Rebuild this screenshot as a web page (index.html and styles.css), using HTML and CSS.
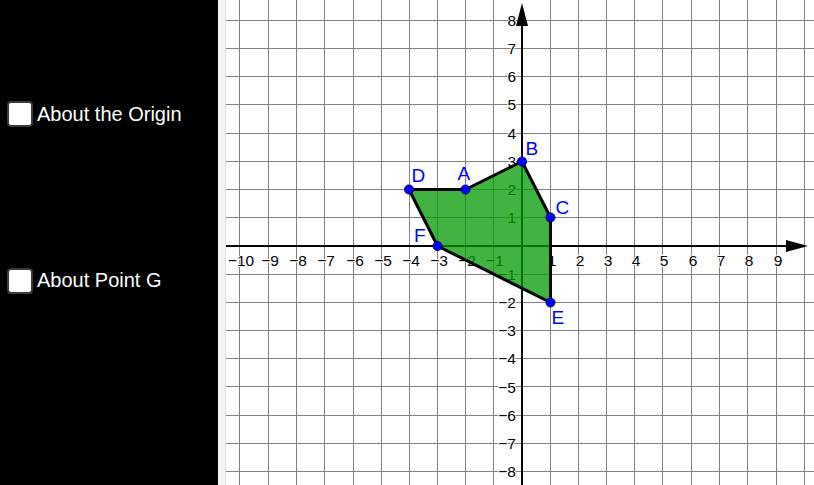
FILE: index.html
```html
<!DOCTYPE html>
<html>
<head>
<meta charset="utf-8">
<link rel="stylesheet" href="styles.css">
</head>
<body>
<div class="app">
  <div class="panel">
    <label class="check first"><span class="box"></span><span class="txt">About the Origin</span></label>
    <label class="check second"><span class="box"></span><span class="txt">About Point G</span></label>
  </div>
  <div class="graph">
    <svg class="plot" width="596" height="485" viewBox="218 0 596 485" xmlns="http://www.w3.org/2000/svg">
      <rect x="218" y="0" width="596" height="485" fill="#ffffff"/>
      <rect x="218" y="0" width="7" height="485" fill="#f4f4f4"/>
      <line x1="225.5" y1="0" x2="225.5" y2="485" stroke="#e2e2e2" stroke-width="1"/>
      <g class="grid" stroke="#808080" stroke-width="1">
        <line x1="239.5" y1="0" x2="239.5" y2="485"/>
        <line x1="268.5" y1="0" x2="268.5" y2="485"/>
        <line x1="296.5" y1="0" x2="296.5" y2="485"/>
        <line x1="324.5" y1="0" x2="324.5" y2="485"/>
        <line x1="353.5" y1="0" x2="353.5" y2="485"/>
        <line x1="381.5" y1="0" x2="381.5" y2="485"/>
        <line x1="409.5" y1="0" x2="409.5" y2="485"/>
        <line x1="437.5" y1="0" x2="437.5" y2="485"/>
        <line x1="465.5" y1="0" x2="465.5" y2="485"/>
        <line x1="493.5" y1="0" x2="493.5" y2="485"/>
        <line x1="550.5" y1="0" x2="550.5" y2="485"/>
        <line x1="578.5" y1="0" x2="578.5" y2="485"/>
        <line x1="606.5" y1="0" x2="606.5" y2="485"/>
        <line x1="634.5" y1="0" x2="634.5" y2="485"/>
        <line x1="662.5" y1="0" x2="662.5" y2="485"/>
        <line x1="691.5" y1="0" x2="691.5" y2="485"/>
        <line x1="719.5" y1="0" x2="719.5" y2="485"/>
        <line x1="747.5" y1="0" x2="747.5" y2="485"/>
        <line x1="776.5" y1="0" x2="776.5" y2="485"/>
        <line x1="804.5" y1="0" x2="804.5" y2="485"/>
        <line x1="226" y1="20.5" x2="814" y2="20.5"/>
        <line x1="226" y1="48.5" x2="814" y2="48.5"/>
        <line x1="226" y1="76.5" x2="814" y2="76.5"/>
        <line x1="226" y1="104.5" x2="814" y2="104.5"/>
        <line x1="226" y1="133.5" x2="814" y2="133.5"/>
        <line x1="226" y1="161.5" x2="814" y2="161.5"/>
        <line x1="226" y1="189.5" x2="814" y2="189.5"/>
        <line x1="226" y1="217.5" x2="814" y2="217.5"/>
        <line x1="226" y1="274.5" x2="814" y2="274.5"/>
        <line x1="226" y1="302.5" x2="814" y2="302.5"/>
        <line x1="226" y1="330.5" x2="814" y2="330.5"/>
        <line x1="226" y1="358.5" x2="814" y2="358.5"/>
        <line x1="226" y1="386.5" x2="814" y2="386.5"/>
        <line x1="226" y1="415.5" x2="814" y2="415.5"/>
        <line x1="226" y1="443.5" x2="814" y2="443.5"/>
        <line x1="226" y1="471.5" x2="814" y2="471.5"/>
      </g>
      <g class="ticks-x" text-anchor="middle">
        <text x="241" y="265.5">−10</text>
        <text x="270" y="265.5">−9</text>
        <text x="298" y="265.5">−8</text>
        <text x="326" y="265.5">−7</text>
        <text x="355" y="265.5">−6</text>
        <text x="383" y="265.5">−5</text>
        <text x="411" y="265.5">−4</text>
        <text x="439" y="265.5">−3</text>
        <text x="467" y="265.5">−2</text>
        <text x="495" y="265.5">−1</text>
        <text x="552" y="265.5">1</text>
        <text x="580" y="265.5">2</text>
        <text x="608" y="265.5">3</text>
        <text x="636" y="265.5">4</text>
        <text x="664" y="265.5">5</text>
        <text x="693" y="265.5">6</text>
        <text x="721" y="265.5">7</text>
        <text x="749" y="265.5">8</text>
        <text x="778" y="265.5">9</text>
      </g>
      <g class="ticks-y" text-anchor="end">
        <text x="516" y="26">8</text>
        <text x="516" y="54">7</text>
        <text x="516" y="82">6</text>
        <text x="516" y="110">5</text>
        <text x="516" y="139">4</text>
        <text x="516" y="167">3</text>
        <text x="516" y="195">2</text>
        <text x="516" y="223">1</text>
        <text x="516" y="280">−1</text>
        <text x="516" y="308">−2</text>
        <text x="516" y="336">−3</text>
        <text x="516" y="364">−4</text>
        <text x="516" y="392.5">−5</text>
        <text x="516" y="421">−6</text>
        <text x="516" y="449">−7</text>
        <text x="516" y="477">−8</text>
      </g>
      <g class="axes">
        <line x1="226" y1="246" x2="790" y2="246" stroke="#000" stroke-width="2"/>
        <polygon points="786,240 808,246 786,252" fill="#000"/>
        <line x1="522" y1="485" x2="522" y2="22" stroke="#000" stroke-width="2"/>
        <polygon points="516,26 522,3 528,26" fill="#000"/>
      </g>
      <polygon class="poly" points="409,189.5 465.5,189.5 522,161.5 550.5,217.5 550.5,302.5 437.5,246"/>
      <g class="pts">
        <circle cx="409" cy="189.5" r="4.6"/>
        <circle cx="465.5" cy="189.5" r="4.6"/>
        <circle cx="522" cy="161.5" r="4.6"/>
        <circle cx="550.5" cy="217.5" r="4.6"/>
        <circle cx="550.5" cy="302.5" r="4.6"/>
        <circle cx="437.5" cy="246" r="4.6"/>
      </g>
      <g class="plabels">
        <text x="457.5" y="180.3">A</text>
        <text x="525.5" y="154.5">B</text>
        <text x="555.5" y="213.5">C</text>
        <text x="411.5" y="181.8">D</text>
        <text x="551.5" y="324">E</text>
        <text x="414" y="241.8">F</text>
      </g>
    </svg>
  </div>
</div>
</body>
</html>
```
FILE: styles.css
```css
html, body {
  margin: 0;
  padding: 0;
  width: 814px;
  height: 485px;
  overflow: hidden;
  background: #ffffff;
}

.app {
  display: flex;
  width: 814px;
  height: 485px;
  font-family: "Liberation Sans", Arial, sans-serif;
}

.panel {
  width: 218px;
  flex: 0 0 218px;
  background: #000000;
  display: flex;
  flex-direction: column;
  padding-top: 101px;
  box-sizing: border-box;
}

.check {
  display: flex;
  align-items: center;
  gap: 4px;
  height: 26px;
  padding-left: 7px;
  color: #ffffff;
  font-size: 20px;
}

.check.second {
  margin-top: 140.5px;
}

.box {
  width: 22px;
  height: 22px;
  background: #ffffff;
  border: 2px solid #3a3a3a;
  border-radius: 4px;
  flex: 0 0 auto;
}

.txt {
  white-space: nowrap;
}

.graph {
  flex: 1 1 auto;
  height: 485px;
}

.plot {
  display: block;
}

.ticks-x text,
.ticks-y text {
  font-family: "Liberation Sans", Arial, sans-serif;
  font-size: 15.5px;
  fill: #000000;
  stroke: #ffffff;
  stroke-width: 2px;
  paint-order: stroke;
  stroke-linejoin: round;
}

.poly {
  fill: rgb(0, 153, 0);
  fill-opacity: 0.75;
  stroke: #000000;
  stroke-width: 3px;
  stroke-linejoin: round;
}

.pts circle {
  fill: #0000ff;
  stroke: #000033;
  stroke-width: 0.8px;
}

.plabels text {
  font-family: "Liberation Sans", Arial, sans-serif;
  font-size: 19px;
  fill: #0000ff;
}
```
